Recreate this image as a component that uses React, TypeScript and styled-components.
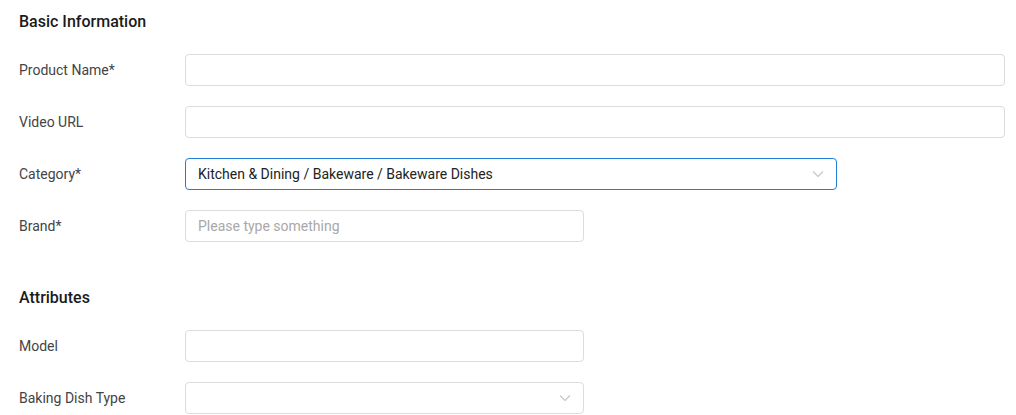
import React from "react";
import styled, { createGlobalStyle } from "styled-components";

const Global = createGlobalStyle`
  html, body { margin: 0; padding: 0; background: #fff; }
  body { font-family: Roboto, "Noto Sans", Arial, sans-serif; -webkit-font-smoothing: antialiased; }
  * { box-sizing: border-box; }
`;

const Page = styled.div`
  padding: 12px 11px 0 19px;
  width: 1016px;
`;

const Section = styled.section`
  display: flex;
  flex-direction: column;
  & + & { margin-top: 46px; }
`;

const Title = styled.h2`
  margin: 0 0 22px;
  font-size: 16px;
  line-height: 20px;
  font-weight: 500;
  color: #1a1a1a;
`;

const Rows = styled.div`
  display: flex;
  flex-direction: column;
  gap: 20px;
`;

const Row = styled.div`
  display: grid;
  grid-template-columns: 166px 1fr;
  align-items: center;
`;

const Label = styled.label`
  font-size: 14px;
  color: #444;
  line-height: 20px;
`;

const Field = styled.div<{ $w?: number; $focused?: boolean }>`
  position: relative;
  width: ${(p) => (p.$w ? `${p.$w}px` : "100%")};
  height: 32px;
  border: 1px solid ${(p) => (p.$focused ? "#1f7fdb" : "#dcdcdc")};
  border-radius: 4px;
  display: flex;
  align-items: center;
  padding: 0 12px;
  background: #fff;
`;

const Value = styled.span<{ $placeholder?: boolean }>`
  flex: 1;
  font-size: 14px;
  color: ${(p) => (p.$placeholder ? "#a8a8a8" : "#222")};
  white-space: nowrap;
`;

const Chevron = () => (
  <svg width="12" height="8" viewBox="0 0 12 8" fill="none">
    <path d="M1 1.5 L6 6.5 L11 1.5" stroke="#c4c4c4" strokeWidth="1.1" />
  </svg>
);

export default function App() {
  return (
    <Page>
      <Global />
      <Section>
        <Title>Basic Information</Title>
        <Rows>
          <Row>
            <Label>Product Name*</Label>
            <Field />
          </Row>
          <Row>
            <Label>Video URL</Label>
            <Field />
          </Row>
          <Row>
            <Label>Category*</Label>
            <Field $w={652} $focused>
              <Value>Kitchen &amp; Dining / Bakeware / Bakeware Dishes</Value>
              <Chevron />
            </Field>
          </Row>
          <Row>
            <Label>Brand*</Label>
            <Field $w={399}>
              <Value $placeholder>Please type something</Value>
            </Field>
          </Row>
        </Rows>
      </Section>
      <Section>
        <Title>Attributes</Title>
        <Rows>
          <Row>
            <Label>Model</Label>
            <Field $w={399} />
          </Row>
          <Row>
            <Label>Baking Dish Type</Label>
            <Field $w={399}>
              <Value />
              <Chevron />
            </Field>
          </Row>
        </Rows>
      </Section>
    </Page>
  );
}
